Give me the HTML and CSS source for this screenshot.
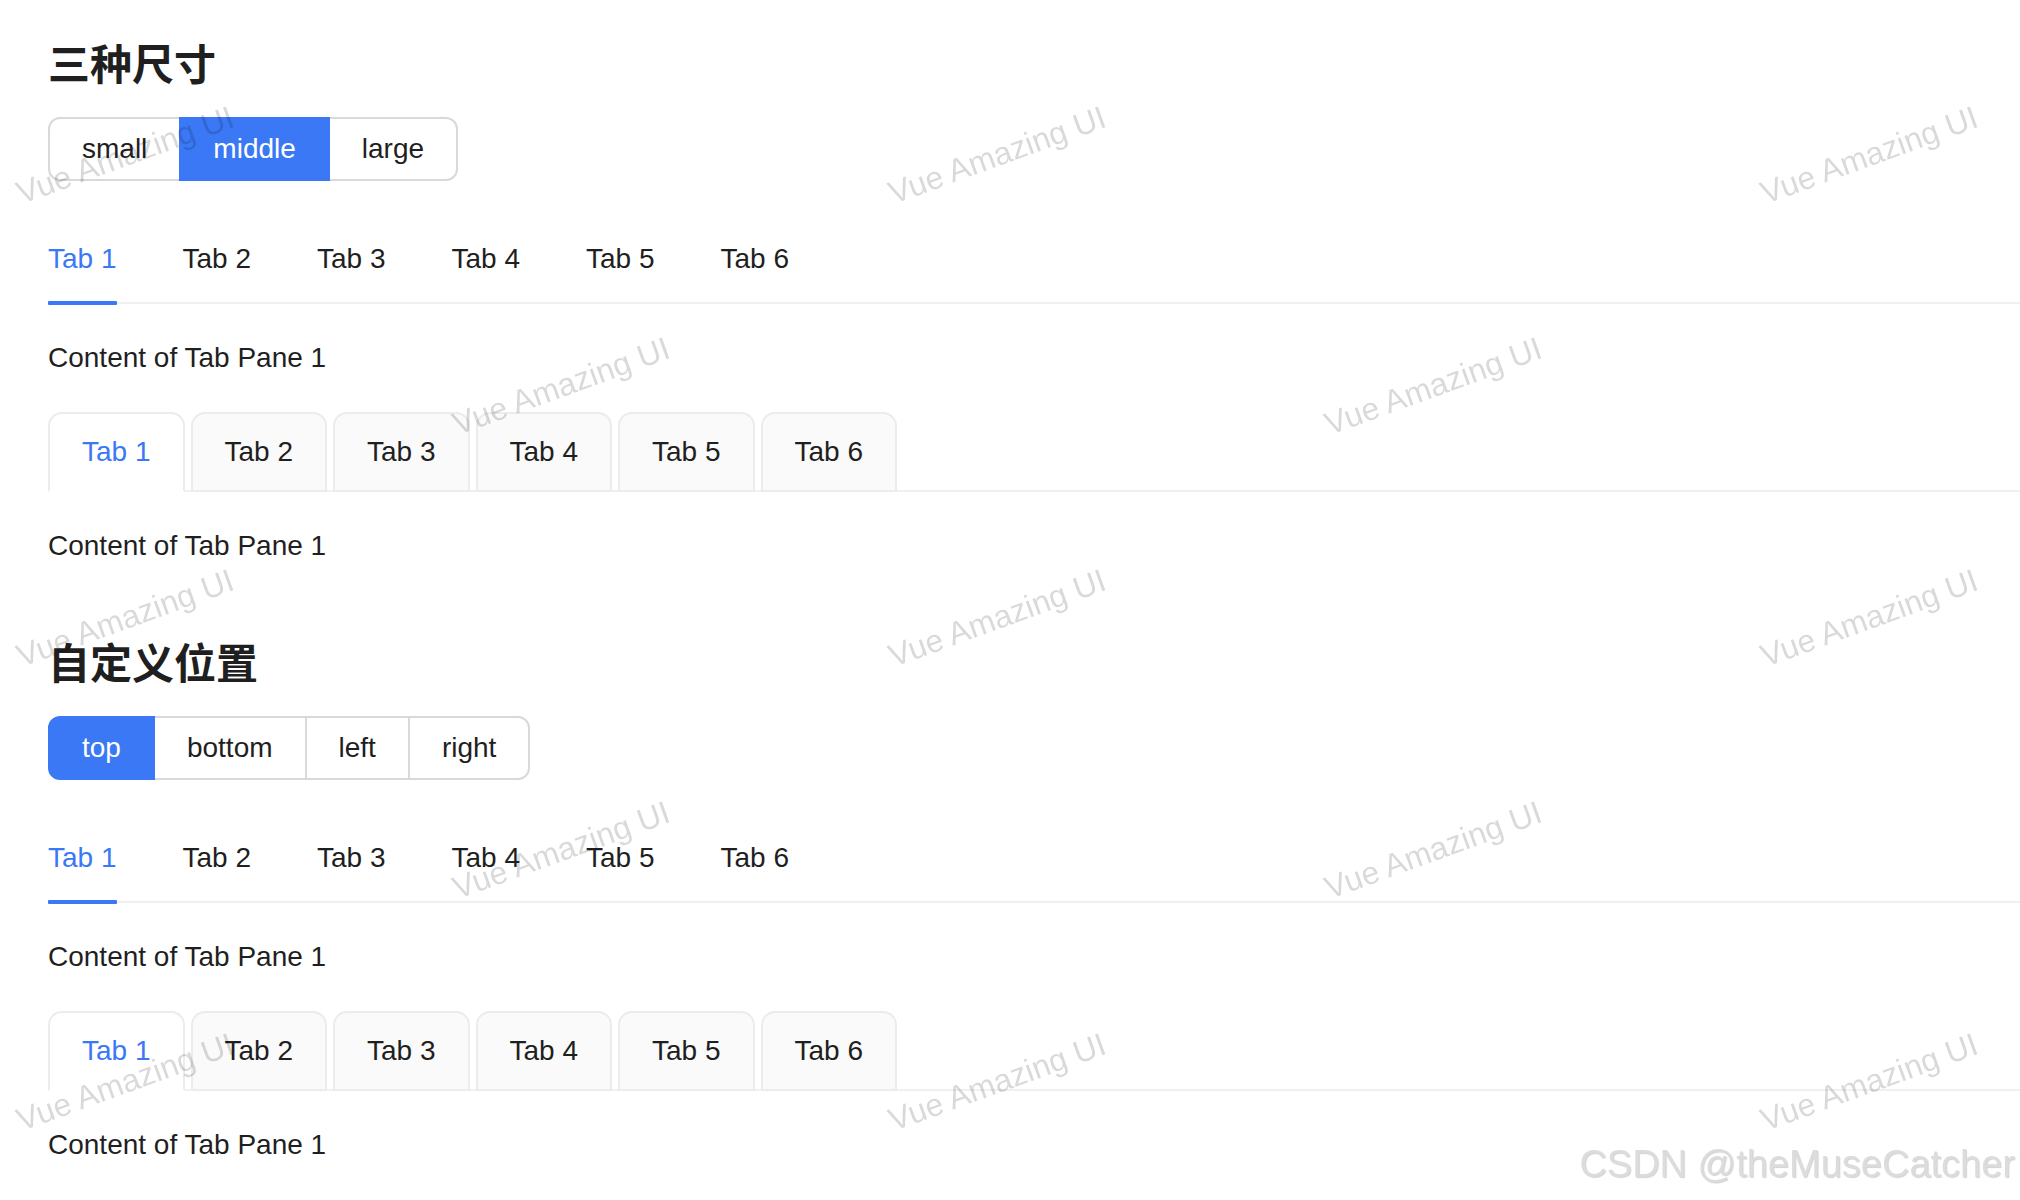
FILE: index.html
```html
<!DOCTYPE html>
<html lang="zh-CN">
<head>
<meta charset="utf-8">
<title>Tabs</title>
<link rel="stylesheet" href="styles.css">
</head>
<body>
<main class="page">
  <h2 class="title first">三种尺寸</h2>
  <div class="seg">
    <span class="seg-item">small</span>
    <span class="seg-item active">middle</span>
    <span class="seg-item">large</span>
  </div>

  <section class="tabs line-tabs">
    <div class="nav">
      <div class="tab active">Tab 1</div>
      <div class="tab">Tab 2</div>
      <div class="tab">Tab 3</div>
      <div class="tab">Tab 4</div>
      <div class="tab">Tab 5</div>
      <div class="tab">Tab 6</div>
    </div>
    <div class="pane">Content of Tab Pane 1</div>
  </section>

  <section class="tabs card-tabs">
    <div class="nav">
      <div class="tab active">Tab 1</div>
      <div class="tab">Tab 2</div>
      <div class="tab">Tab 3</div>
      <div class="tab">Tab 4</div>
      <div class="tab">Tab 5</div>
      <div class="tab">Tab 6</div>
    </div>
    <div class="pane">Content of Tab Pane 1</div>
  </section>

  <h2 class="title second">自定义位置</h2>
  <div class="seg">
    <span class="seg-item active">top</span>
    <span class="seg-item">bottom</span>
    <span class="seg-item">left</span>
    <span class="seg-item">right</span>
  </div>

  <section class="tabs line-tabs">
    <div class="nav">
      <div class="tab active">Tab 1</div>
      <div class="tab">Tab 2</div>
      <div class="tab">Tab 3</div>
      <div class="tab">Tab 4</div>
      <div class="tab">Tab 5</div>
      <div class="tab">Tab 6</div>
    </div>
    <div class="pane">Content of Tab Pane 1</div>
  </section>

  <section class="tabs card-tabs">
    <div class="nav">
      <div class="tab active">Tab 1</div>
      <div class="tab">Tab 2</div>
      <div class="tab">Tab 3</div>
      <div class="tab">Tab 4</div>
      <div class="tab">Tab 5</div>
      <div class="tab">Tab 6</div>
    </div>
    <div class="pane">Content of Tab Pane 1</div>
  </section>
</main>

<div class="watermark" aria-hidden="true">
  <span class="wm" style="left:125px;top:155px">Vue Amazing UI</span>
  <span class="wm" style="left:997px;top:155px">Vue Amazing UI</span>
  <span class="wm" style="left:1869px;top:155px">Vue Amazing UI</span>
  <span class="wm" style="left:561px;top:386px">Vue Amazing UI</span>
  <span class="wm" style="left:1433px;top:386px">Vue Amazing UI</span>
  <span class="wm" style="left:125px;top:618px">Vue Amazing UI</span>
  <span class="wm" style="left:997px;top:618px">Vue Amazing UI</span>
  <span class="wm" style="left:1869px;top:618px">Vue Amazing UI</span>
  <span class="wm" style="left:561px;top:850px">Vue Amazing UI</span>
  <span class="wm" style="left:1433px;top:850px">Vue Amazing UI</span>
  <span class="wm" style="left:125px;top:1082px">Vue Amazing UI</span>
  <span class="wm" style="left:997px;top:1082px">Vue Amazing UI</span>
  <span class="wm" style="left:1869px;top:1082px">Vue Amazing UI</span>
</div>

<div class="csdn">CSDN @theMuseCatcher</div>
</body>
</html>
```

FILE: styles.css
```css
html, body {
  margin: 0;
  padding: 0;
  background: #ffffff;
}

body {
  font-family: "Liberation Sans", Arial, "Noto Sans CJK SC", sans-serif;
  font-size: 28px;
  color: #1f1f1f;
  overflow: hidden;
  height: 1200px;
}

.page {
  padding-left: 48px;
}

.title {
  font-family: "Noto Sans CJK SC", "Liberation Sans", sans-serif;
  font-size: 42px;
  font-weight: 700;
  line-height: 56px;
  margin: 0;
  color: #1f1f1f;
}

.title.first {
  margin-top: 34px;
}

.title.second {
  margin-top: 65px;
}

/* segmented radio buttons */
.seg {
  display: flex;
  margin-top: 27px;
}

.seg-item {
  position: relative;
  box-sizing: border-box;
  height: 64px;
  line-height: 60px;
  padding: 0 32px;
  border: 2px solid #d9d9d9;
  background: #ffffff;
  color: #1f1f1f;
  white-space: nowrap;
}

.seg-item + .seg-item {
  margin-left: -2px;
}

.seg-item:first-child {
  border-radius: 12px 0 0 12px;
}

.seg-item:last-child {
  border-radius: 0 12px 12px 0;
}

.seg-item.active {
  z-index: 1;
  background: #3b78f6;
  border-color: #3b78f6;
  color: #ffffff;
}

/* tabs */
.tabs {
  margin-top: 32px;
}

.nav {
  position: relative;
  display: flex;
  align-items: flex-end;
}

.tab {
  position: relative;
  line-height: 44px;
  white-space: nowrap;
}

.tab.active {
  color: #3b78f6;
}

.pane {
  margin-top: 32px;
  line-height: 44px;
}

/* line type */
.line-tabs .nav {
  border-bottom: 2px solid #f0f0f0;
}

.line-tabs .tab {
  padding: 24px 0 21px;
}

.line-tabs .tab + .tab {
  margin-left: 66px;
}

.line-tabs .tab.active::after {
  content: "";
  position: absolute;
  left: 0;
  right: 0;
  bottom: -3px;
  height: 4px;
  border-radius: 1px;
  background: #3b78f6;
}

/* card type */
.card-tabs .nav::before {
  content: "";
  position: absolute;
  left: 0;
  right: 0;
  bottom: 0;
  height: 2px;
  background: #f0f0f0;
}

.card-tabs .tab {
  box-sizing: border-box;
  height: 80px;
  padding: 16px 32px;
  border: 2px solid #ececec;
  border-radius: 14px 14px 0 0;
  background: #fafafa;
}

.card-tabs .tab + .tab {
  margin-left: 6px;
}

.card-tabs .tab.active {
  z-index: 1;
  background: #ffffff;
  border-bottom-color: #ffffff;
}

/* watermark overlay */
.watermark {
  position: fixed;
  inset: 0;
  overflow: hidden;
  pointer-events: none;
  z-index: 10;
}

.wm {
  position: absolute;
  transform: translate(-50%, -50%) rotate(-20deg);
  font-family: "Liberation Sans", Arial, sans-serif;
  font-size: 32px;
  line-height: 1;
  color: rgba(0, 0, 0, 0.15);
  white-space: nowrap;
}

/* CSDN corner watermark */
.csdn {
  position: fixed;
  right: 5px;
  top: 1145px;
  font-family: "Liberation Sans", Arial, sans-serif;
  font-size: 38px;
  line-height: 38px;
  color: #dcdcdc;
  text-shadow: 1px 1px 1px rgba(0, 0, 0, 0.18), -1px -1px 0 rgba(255, 255, 255, 0.9);
  white-space: nowrap;
  pointer-events: none;
  z-index: 11;
}
```
